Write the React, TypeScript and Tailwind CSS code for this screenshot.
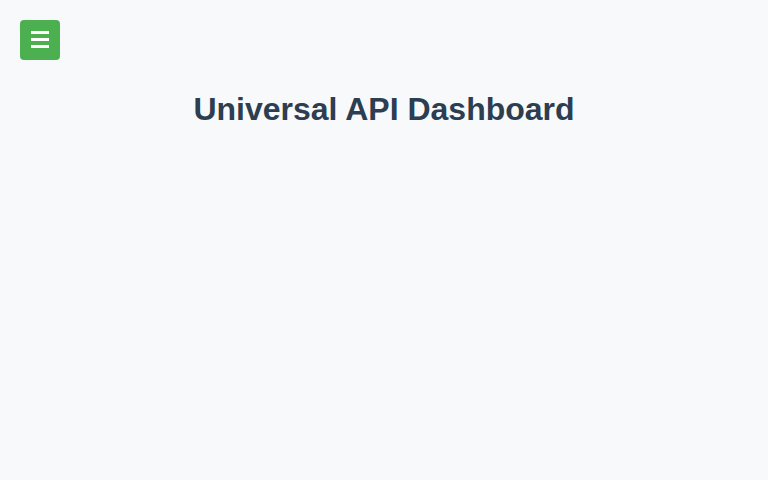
export default function App() {
  return (
    <div className="min-h-screen bg-[#f8f9fa] p-5 font-['Liberation_Sans',Arial,sans-serif]">
      {/* Menu toggle */}
      <button className="flex h-10 w-10 flex-col items-center justify-center gap-[4px] rounded bg-[#4caf50] pb-[1px]">
        <span className="block h-[3px] w-[18px] bg-white" />
        <span className="block h-[3px] w-[18px] bg-white" />
        <span className="block h-[3px] w-[18px] bg-white" />
      </button>
      <h1 className="mt-[31px] text-center text-[32px] font-bold leading-[37px] text-[#2c3e50]">
        Universal API Dashboard
      </h1>
    </div>
  );
}
